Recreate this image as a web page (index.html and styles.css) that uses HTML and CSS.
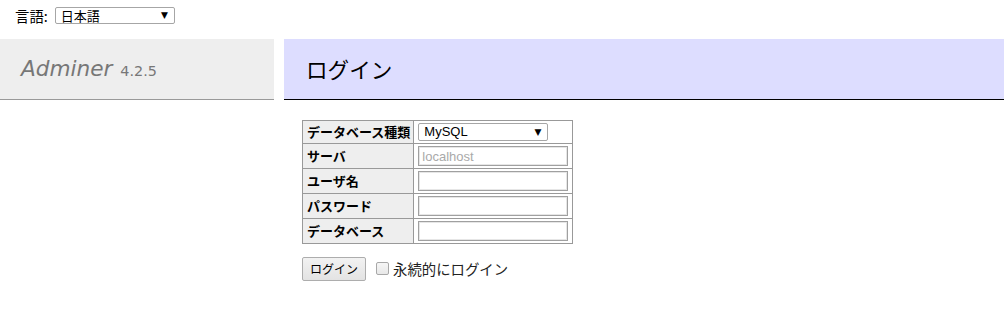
FILE: index.html
```html
<!DOCTYPE html>
<html>
<head>
    <meta charset="utf-8">
    <title>ログイン - Adminer</title>
    <link rel="stylesheet" href="styles.css">
</head>
<body>
    <div class="lang">
        <label class="lang-label" for="lang">言語:</label>
        <span class="select lang-select">
            <select id="lang">
                <option>日本語</option>
            </select>
        </span>
    </div>

    <div class="header">
        <h1 class="brand"><span class="brand-name">Adminer</span> <span class="version">4.2.5</span></h1>
        <h2 class="title">ログイン</h2>
    </div>

    <form class="login">
        <table class="login-table">
            <tr class="row-first">
                <th>データベース種類</th>
                <td>
                    <span class="select db-select">
                        <select>
                            <option>MySQL</option>
                        </select>
                    </span>
                </td>
            </tr>
            <tr>
                <th>サーバ</th>
                <td><input type="text" placeholder="localhost"></td>
            </tr>
            <tr>
                <th>ユーザ名</th>
                <td><input type="text"></td>
            </tr>
            <tr>
                <th>パスワード</th>
                <td><input type="password"></td>
            </tr>
            <tr>
                <th>データベース</th>
                <td><input type="text"></td>
            </tr>
        </table>

        <div class="actions">
            <button type="button" class="login-btn">ログイン</button>
            <label class="permanent"><input type="checkbox" class="check"> 永続的にログイン</label>
        </div>
    </form>
</body>
</html>
```

FILE: styles.css
```css
body {
    margin: 0;
    font: 14.4px/1.25 "DejaVu Sans", "Noto Sans CJK JP", sans-serif;
    color: #000;
    background: #fff;
}

/* language switch */
.lang {
    display: flex;
    align-items: flex-start;
    gap: 7px;
    height: 32px;
    padding: 7px 0 0 15px;
    box-sizing: border-box;
}
.lang-label {
    font-family: "Noto Sans CJK JP", sans-serif;
    font-size: 14.4px;
    line-height: 17px;
}

.select { position: relative; display: inline-block; }
.select select {
    -webkit-appearance: none;
    appearance: none;
    display: block;
    margin: 0;
    height: 17px;
    border: 1px solid #a6a6a6;
    border-radius: 2px;
    background: #fff;
    color: #000;
    padding: 0 0 0 5px;
    font: 13px/15px "Noto Sans CJK JP", sans-serif;
    box-sizing: border-box;
}
.select::after {
    content: "▼";
    position: absolute;
    right: 7px;
    top: 3px;
    font: 9px/11px "DejaVu Sans", sans-serif;
    color: #000;
    pointer-events: none;
}
.lang-select select { width: 120px; }

/* header bars */
.header {
    display: flex;
    gap: 10px;
    margin: 7px 3px 0 0;
}
.brand, .title {
    margin: 0;
    height: 61px;
    box-sizing: border-box;
    font-size: 21.6px;
    font-weight: normal;
}
.brand {
    width: 274px;
    flex: none;
    padding: 16px 0 0 21px;
    line-height: 27px;
    background: #eee;
    border-bottom: 1px solid #999;
    color: #777;
}
.brand-name { font-style: italic; }
.version {
    font-size: 14.4px;
    margin-left: 1px;
}
.title {
    flex: 1;
    display: flex;
    align-items: center;
    padding: 0 0 1px 22px;
    background: #ddf;
    border-bottom: 1px solid #000;
    font-family: "Noto Sans CJK JP", sans-serif;
}

/* login form */
.login { margin: 20px 0 0 302px; }
.login-table {
    border-collapse: collapse;
    font-size: 13px;
    line-height: 16px;
}
.login-table th, .login-table td {
    border: 1px solid #999;
    padding: 2px 4px;
    height: 20px;
    text-align: left;
    vertical-align: middle;
}
.login-table th {
    background: #eee;
    font-family: "Noto Sans CJK JP", sans-serif;
    font-weight: bold;
    padding-right: 3px;
}
.login-table .row-first th, .login-table .row-first td { height: 18px; }
.db-select select {
    width: 130px;
    height: 18px;
    font: 13px/16px "Liberation Sans", Arial, sans-serif;
}
.db-select::after { top: 4px; }
.login-table input {
    display: block;
    width: 150px;
    height: 20px;
    margin: 0;
    box-sizing: border-box;
    border: 1px solid #a0a0a0;
    box-shadow: inset 0 0 0 1px #e6e6e6;
    padding: 0 3px;
    font: 13px "Liberation Sans", Arial, sans-serif;
    color: #000;
    background: #fff;
}
.login-table input::placeholder { color: #a9a9a9; }

.actions {
    display: flex;
    align-items: center;
    gap: 10px;
    margin-top: 13px;
}
.login-btn {
    width: 64px;
    height: 24px;
    margin: 0;
    padding: 0;
    border: 1px solid #adadad;
    border-radius: 2px;
    background: linear-gradient(#f2f2f2, #e3e3e3);
    font: 12px/20px "Noto Sans CJK JP", sans-serif;
    color: #000;
    cursor: pointer;
}
.permanent {
    display: flex;
    align-items: center;
    gap: 4px;
    font-family: "Noto Sans CJK JP", sans-serif;
    font-size: 14.4px;
    color: #222;
}
.check {
    -webkit-appearance: none;
    appearance: none;
    width: 13px;
    height: 13px;
    margin: 0 0 2px 0;
    border: 1px solid #a8a8a8;
    border-radius: 2px;
    background: linear-gradient(#f6f6f6, #e8e8e8);
}
```
